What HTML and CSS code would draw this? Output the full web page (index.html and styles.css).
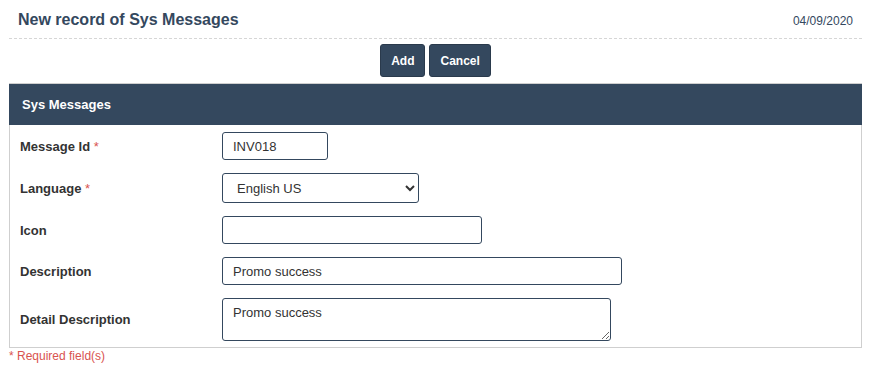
FILE: index.html
```html
<!DOCTYPE html>
<html>
<head>
<meta charset="utf-8">
<link rel="stylesheet" href="styles.css">
</head>
<body>
<div class="page">
  <div class="topbar">
    <h1 class="title">New record of Sys Messages</h1>
    <span class="date">04/09/2020</span>
  </div>
  <div class="actions">
    <button class="btn">Add</button>
    <button class="btn">Cancel</button>
  </div>
  <div class="panel">
    <div class="panel-head">Sys Messages</div>
    <div class="panel-body">
      <div class="row">
        <label class="lbl">Message Id <span class="req">*</span></label>
        <input class="field w-id" type="text" value="INV018">
      </div>
      <div class="row">
        <label class="lbl">Language <span class="req">*</span></label>
        <select class="field sel"><option>English US</option></select>
      </div>
      <div class="row">
        <label class="lbl">Icon</label>
        <input class="field w-icon" type="text" value="">
      </div>
      <div class="row">
        <label class="lbl">Description</label>
        <input class="field w-desc" type="text" value="Promo success">
      </div>
      <div class="row">
        <label class="lbl">Detail Description</label>
        <textarea class="field area">Promo success</textarea>
      </div>
    </div>
  </div>
  <div class="note">* Required field(s)</div>
</div>
</body>
</html>
```
FILE: styles.css
```css
html, body { margin: 0; padding: 0; background: #fff; }
body { font-family: "Liberation Sans", Arial, sans-serif; color: #333; }
.page { padding: 0 15px 0 9px; }
.topbar {
  display: flex; align-items: center; justify-content: space-between;
  height: 38px; border-bottom: 1px dashed #d6d6d6; padding: 0 9px 0 9px;
}
.title { margin: 0; font-size: 16px; font-weight: bold; color: #34485e; padding-top: 2px; }
.date { font-size: 12px; color: #34485e; padding-top: 4px; }
.actions { display: flex; justify-content: center; gap: 4px; margin-top: 5px; }
.btn {
  height: 33px; padding: 0 10px; background: #34485e; color: #fff; border: 1px solid #2a3a4c;
  border-radius: 3px; font-family: "Liberation Sans", Arial, sans-serif; font-weight: bold; font-size: 12px;
}
.panel { margin-top: 6px; border: 1px solid #cfcfcf; }
.panel-head {
  background: #34485e; color: #fff; font-weight: bold; font-size: 13px;
  height: 41px; display: flex; align-items: center; padding-left: 13px; margin: -1px -1px 0 -1px;
  border-top: 1px solid #cfcfcf;
}
.panel-body { padding: 7px 10px 6px 10px; display: flex; flex-direction: column; gap: 13px; }
.row { display: flex; align-items: center; }
.lbl { width: 202px; font-size: 13px; font-weight: bold; color: #333; }
.req { color: #d9534f; font-weight: normal; }
.field {
  box-sizing: border-box; border: 1px solid #34485e; border-radius: 3px; background: #fff;
  font-family: "Liberation Sans", Arial, sans-serif; font-size: 13px; color: #333; padding: 0 10px; margin: 0;
}
.w-id { width: 106px; height: 28px; }
.sel { width: 197px; height: 30px; padding-left: 10px; }
.w-icon { width: 260px; height: 28px; }
.w-desc { width: 400px; height: 28px; }
.area { width: 389px; height: 43px; padding-top: 6px; resize: vertical; display: block; }
.note { font-size: 12px; color: #d9534f; margin-top: 0; padding-top: 1px; }
```
